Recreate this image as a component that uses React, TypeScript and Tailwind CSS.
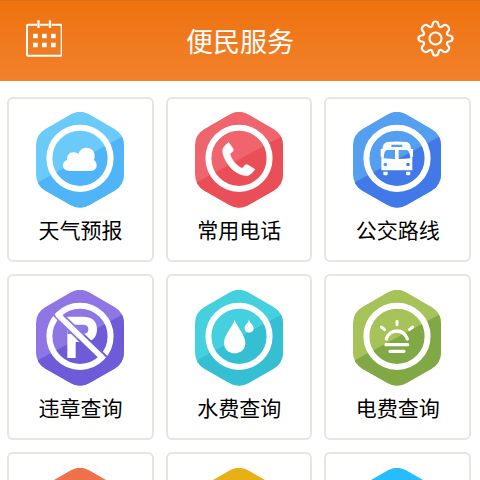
import type { ReactNode } from 'react';

type Service = {
  id: string;
  label: string;
  light: string;
  dark: string;
  shift: number;
  hasRing: boolean;
  glyph: ReactNode;
};

const HEXAGON =
  'M211.5 73.5A57 57 0 0 1 268.5 73.5L343.5 116.7A57 57 0 0 1 372 166.2V252.6A57 57 0 0 1 343.5 302.1L268.5 345.3A57 57 0 0 1 211.5 345.3L136.5 302.1A57 57 0 0 1 108 252.6V166.2A57 57 0 0 1 136.5 116.7Z';

const services: Service[] = [
  {
    id: 'weather',
    label: '天气预报',
    light: '#6acbfa',
    dark: '#50b5f8',
    shift: 0,
    hasRing: true,
    glyph: (
      <path
        fill="#fff"
        d="M209 243C196 243 189 236 189 226C189 218 194 212 201 210C200 196 208 187 219 187C226 187 231 189 235 192C239 180 248 173 259 173C274 173 285 184 284 200C284 204 283 207 282 210C287 213 290 219 290 226C290 236 283 243 272 243Z"
      />
    ),
  },
  {
    id: 'phone',
    label: '常用电话',
    light: '#f0646d',
    dark: '#ea4f57',
    shift: 4,
    hasRing: true,
    glyph: (
      <path
        fill="#fff"
        stroke="#fff"
        strokeWidth="1"
        strokeLinejoin="round"
        d="M205 157L219 177V183L209 191C213 208 228 227 246 235L254 225Q258 222 262 224L284 238Q273 254 263 257C248 258 227 250 211 233C195 215 185 194 187 178Q189 169 205 157Z"
      />
    ),
  },
  {
    id: 'bus',
    label: '公交路线',
    light: '#559ff0',
    dark: '#4179e8',
    shift: 8,
    hasRing: true,
    glyph: (
      <>
        <path
          fill="#fff"
          fillRule="evenodd"
          d="M203 156Q231 153 261 156Q273 158 274 177H280V200H278V241H185V200H183V177H188Q190 158 203 156ZM215 164V171H248V164ZM202 180Q193 181 192 205Q208 207 226 207V180ZM237 180V207Q255 207 272 205Q270 181 261 180ZM197 218A5.5 5.5 0 1 0 197 229A5.5 5.5 0 1 0 197 218ZM265 218A5.5 5.5 0 1 0 265 229A5.5 5.5 0 1 0 265 218Z"
        />
        <path fill="#fff" d="M191 245H204V252Q204 256 200 256H195Q191 256 191 252ZM259 245H272V252Q272 256 268 256H263Q259 256 259 252Z" />
      </>
    ),
  },
  {
    id: 'violation',
    label: '违章查询',
    light: '#8e77e5',
    dark: '#6d5bd8',
    shift: 0,
    hasRing: false,
    glyph: (
      <>
        <mask id="letter-gap" maskUnits="userSpaceOnUse" x="108" y="66" width="264" height="288">
          <path d="M108 66H372V354H108Z" fill="#fff" />
          <path d="M171 138L306 268" stroke="#000" strokeWidth="28" />
        </mask>
        <mask id="ring-gap" maskUnits="userSpaceOnUse" x="108" y="66" width="264" height="288">
          <path d="M108 66H372V354H108Z" fill="#fff" />
          <path d="M149 130L180 160M298 245L331 277" stroke="#000" strokeWidth="6" />
        </mask>
        <path
          fill="#fff"
          fillRule="evenodd"
          mask="url(#letter-gap)"
          d="M202 146H250C278 146 291 161 291 184C291 207 278 222 251 222H227V270H202ZM203 170V198H248C259 198 265 194 265 184C265 174 259 170 248 170Z"
        />
        <circle cx="240" cy="205" r="91.75" fill="none" stroke="#fff" strokeWidth="18" mask="url(#ring-gap)" />
        <path d="M172 139L307 269" stroke="#fff" strokeWidth="17" fill="none" />
      </>
    ),
  },
  {
    id: 'water',
    label: '水费查询',
    light: '#45d0e0',
    dark: '#34bfd3',
    shift: 4,
    hasRing: true,
    glyph: (
      <path
        fill="#fff"
        d="M223 155C229 176 255 201 255 225C255 244 241 256 223 256C205 256 191 244 191 225C191 201 217 176 223 155ZM266 155C268 164 280 171 280 181C280 189 274 194 266 194C258 194 253 189 253 181C253 171 264 164 266 155Z"
      />
    ),
  },
  {
    id: 'power',
    label: '电费查询',
    light: '#a5c358',
    dark: '#80a845',
    shift: 8,
    hasRing: true,
    glyph: (
      <g stroke="#fff" fill="none" strokeLinecap="round">
        <path d="M200 213C204 199 216 189 231 189S258 199 263 213" strokeWidth="10" />
        <path d="M199 230H264M211 250H253" strokeWidth="10" />
        <path d="M232 160V170M185 177L195 185M279 177L269 185" strokeWidth="9" />
      </g>
    ),
  },
  { id: 'next-orange', label: '', light: '#ee714a', dark: '#e55f3a', shift: 0, hasRing: true, glyph: null },
  { id: 'next-yellow', label: '', light: '#e8b016', dark: '#dc9e10', shift: 4, hasRing: true, glyph: null },
  { id: 'next-blue', label: '', light: '#27bcfd', dark: '#18a5ee', shift: 8, hasRing: true, glyph: null },
];

function Badge({ service }: { service: Service }) {
  const clip = `hexagon-${service.id}`;
  return (
    <svg className="mr-[0.9px] h-24 w-[88px] shrink-0" viewBox="108 66 264 288">
      <clipPath id={clip}>
        <path d={HEXAGON} />
      </clipPath>
      <path d={HEXAGON} fill={service.light} />
      <path d="M108 280L372 137V360H108Z" fill={service.dark} clipPath={`url(#${clip})`} />
      {service.hasRing && <circle cx="240" cy="205" r="91.75" fill="none" stroke="#fff" strokeWidth="18" />}
      <g transform={`translate(${service.shift} 0)`}>{service.glyph}</g>
    </svg>
  );
}

function ServiceCard({ service }: { service: Service }) {
  return (
    <div className="flex h-[165.7px] flex-col items-center rounded-md border-2 border-[#e8e6e0] bg-white pt-[13.5px]">
      <Badge service={service} />
      <span className="mt-[7px] text-[21px] leading-7 text-black">{service.label}</span>
    </div>
  );
}

function CalendarIcon() {
  return (
    <svg className="h-[37px] w-9" viewBox="78 61 108 111" fill="none" stroke="#fff">
      <path d="M111 75H84Q81 75 81 78V165Q81 168 84 168H182Q185 168 185 165V78Q185 75 182 75H155M120 75H146" strokeWidth="6" />
      <path d="M115.500 62V85M150 62V85" strokeWidth="7" />
      <path d="M99 109H113M126 109H140M153 109H167M99 136H113M126 136H140M153 136H167" strokeWidth="14" />
    </svg>
  );
}

function GearIcon() {
  return (
    <svg className="h-[37px] w-[37px]" viewBox="-55.500 -55.500 111 111" fill="none" stroke="#fff" strokeWidth="6.500" strokeLinejoin="round">
      <circle r="18" />
      <path d="M-8 -45Q-7 -51 0 -51T8 -45L10 -38Q12 -33 18 -35L25 -40Q31 -43 37 -37T40 -25L35 -18Q33 -12 38 -10L45 -8Q51 -7 51 0T45 8L38 10Q33 12 35 18L40 25Q43 31 37 37T25 40L18 35Q12 33 10 38L8 45Q7 51 0 51T-8 45L-10 38Q-12 33 -18 35L-25 40Q-31 43 -37 37T-40 25L-35 18Q-33 12 -38 10L-45 8Q-51 7 -51 0T-45 -8L-38 -10Q-33 -12 -35 -18L-40 -25Q-43 -31 -37 -37T-25 -40L-18 -35Q-12 -33 -10 -38Z" />
    </svg>
  );
}

export default function App() {
  return (
    <div className="h-[480px] w-[480px] overflow-hidden bg-white font-['Noto_Sans_CJK_SC',sans-serif]">
      <header className="flex h-[81px] items-center justify-between border-t border-[#d9701f] bg-linear-to-b from-[#ef720b] to-[#f1812a] pr-[26px] pb-[5px] pl-[26px]">
        <CalendarIcon />
        <h1 className="pt-1 pl-px text-[27px] leading-9 font-normal text-white">便民服务</h1>
        <GearIcon />
      </header>
      <main className="grid w-[471px] grid-cols-3 gap-3 pt-[15.7px] pl-[7.3px]">
        {services.map((service) => (
          <ServiceCard key={service.id} service={service} />
        ))}
      </main>
    </div>
  );
}
